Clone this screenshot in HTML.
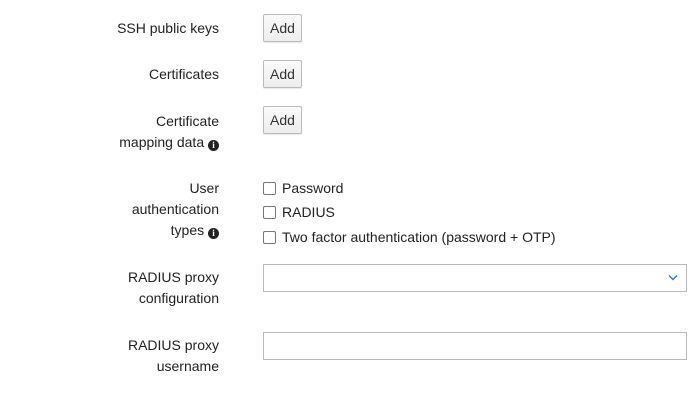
<!DOCTYPE html>
<html><head><style>
body{margin:0;width:696px;height:416px;background:#fff;font-family:"Liberation Sans",sans-serif;font-size:14px;color:#222;position:relative;overflow:hidden}
.l{position:absolute;right:477px;text-align:right;line-height:21px;white-space:nowrap}
.b{position:absolute;left:263px;width:37px;height:26px;border:1px solid #bbb;border-radius:2px;background:linear-gradient(#fafafa,#ededed);box-shadow:0 1px 1px rgba(0,0,0,.1);text-align:center;line-height:26px;font-size:14px;color:#333}
.cb{position:absolute;left:263px;width:11px;height:11px;border:1px solid #777;border-radius:2px;background:#fff}
.ct{position:absolute;left:282px;line-height:16px;white-space:nowrap}
.i{display:inline-block;width:11px;height:11px;border-radius:50%;background:#222;color:#fff;font-size:9px;font-weight:bold;line-height:11px;text-align:center;vertical-align:-1px;font-family:"Liberation Serif",serif}
.box{position:absolute;left:263px;width:422px;height:26px;border:1px solid #bbb;background:#fff}
</style></head><body>
<div class="l" style="top:18px">SSH public keys</div>
<div class="b" style="top:14px">Add</div>
<div class="l" style="top:64px">Certificates</div>
<div class="b" style="top:60px">Add</div>
<div class="l" style="top:111px">Certificate<br>mapping data <span class="i">i</span></div>
<div class="b" style="top:106px">Add</div>
<div class="l" style="top:178px">User<br>authentication<br>types <span class="i">i</span></div>
<div class="cb" style="top:182px"></div><div class="ct" style="top:180px">Password</div>
<div class="cb" style="top:206px"></div><div class="ct" style="top:204px">RADIUS</div>
<div class="cb" style="top:231px"></div><div class="ct" style="top:229px">Two factor authentication (password + OTP)</div>
<div class="l" style="top:267px">RADIUS proxy<br>configuration</div>
<div class="box" style="top:264px"><svg style="position:absolute;right:8px;top:9px" width="10" height="7" viewBox="0 0 10 7"><path d="M1 1.5L5 5.5L9 1.5" fill="none" stroke="#2a7bc0" stroke-width="1.4"/></svg></div>
<div class="l" style="top:335px">RADIUS proxy<br>username</div>
<div class="box" style="top:332px"></div>
</body></html>
